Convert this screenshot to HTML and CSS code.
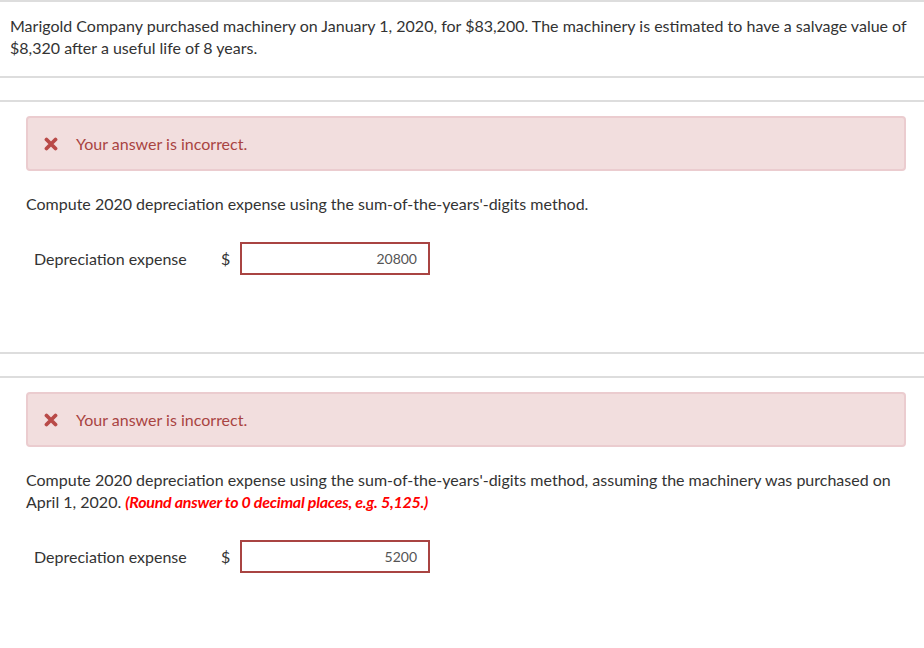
FILE: index.html
```html
<!DOCTYPE html>
<html>
<head>
<meta charset="utf-8">
<link rel="stylesheet" href="styles.css">
</head>
<body>
<div class="intro">Marigold Company purchased machinery on January 1, 2020, for $83,200. The machinery is estimated to have a salvage value of $8,320 after a useful life of 8 years.</div>

<div class="part">
  <div class="alert">
    <svg class="x-icon" viewBox="0 0 14 14" width="14" height="14"><path d="M2.5 2.5 L11.5 11.5 M11.5 2.5 L2.5 11.5" stroke="#b94a48" stroke-width="3.8" stroke-linecap="round"/></svg>
    <span>Your answer is incorrect.</span>
  </div>
  <p class="question">Compute 2020 depreciation expense using the sum-of-the-years'-digits method.</p>
  <div class="row">
    <span class="label">Depreciation expense</span>
    <span class="dollar">$</span>
    <span class="input">20800</span>
  </div>
</div>

<div class="part">
  <div class="alert">
    <svg class="x-icon" viewBox="0 0 14 14" width="14" height="14"><path d="M2.5 2.5 L11.5 11.5 M11.5 2.5 L2.5 11.5" stroke="#b94a48" stroke-width="3.8" stroke-linecap="round"/></svg>
    <span>Your answer is incorrect.</span>
  </div>
  <p class="question">Compute 2020 depreciation expense using the sum-of-the-years'-digits method, assuming the machinery was purchased on April 1, 2020. <b class="note">(Round answer to 0 decimal places, e.g. 5,125.)</b></p>
  <div class="row">
    <span class="label">Depreciation expense</span>
    <span class="dollar">$</span>
    <span class="input">5200</span>
  </div>
</div>
</body>
</html>
```

FILE: styles.css
```css
html, body {
  margin: 0;
  padding: 0;
  background: #fff;
}
body {
  font-family: Lato, "Open Sans", sans-serif;
  font-size: 16px;
  line-height: 22px;
  color: #333;
}
.intro {
  border-top: 2px solid #ddd;
  border-bottom: 2px solid #ddd;
  padding: 13px 10px 17px 10px;
  margin-bottom: 22px;
}
.part {
  border-top: 2px solid #ddd;
  border-bottom: 2px solid #ddd;
  padding: 14px 18px 77px 26px;
  margin-bottom: 22px;
}
.alert {
  display: flex;
  align-items: center;
  height: 51px;
  background: #f2dede;
  border: 2px solid #ebcccf;
  border-radius: 4px;
  padding-left: 16px;
  color: #a94442;
}
.x-icon {
  margin-right: 18px;
  flex: none;
}
.question {
  margin: 22px 0 27px 0;
}
.note {
  color: #f00;
  font-weight: bold;
  font-style: italic;
  letter-spacing: -0.25px;
}
.row {
  display: flex;
  align-items: center;
  padding-left: 8px;
}
.label {
  width: 187px;
}
.dollar {
  width: 19px;
}
.input {
  box-sizing: border-box;
  width: 190px;
  height: 33px;
  border: 2px solid #a94442;
  text-align: right;
  padding-right: 11px;
  font-size: 14px;
  line-height: 29px;
  color: #555;
}
```
